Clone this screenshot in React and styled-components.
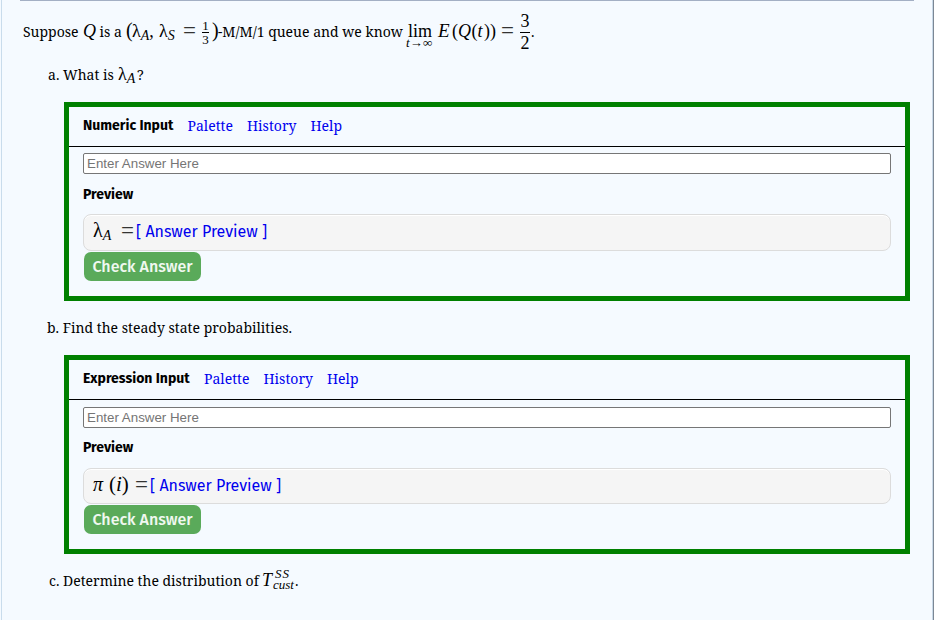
import React from "react"
import styled, { createGlobalStyle } from "styled-components"

const serif = `"Noto Serif", "DejaVu Serif Condensed", "DejaVu Serif", serif`
const sans = `"Fira Sans", "Noto Sans", sans-serif`
const math = `"Liberation Serif", "Times New Roman", serif`

const GlobalStyle = createGlobalStyle`
  * {
    box-sizing: border-box;
  }
  body {
    margin: 0;
    background: #f5faff;
  }
`

const Page = styled.main`
  width: 932px;
  height: 620px;
  margin-left: 1px;
  padding: 0 18px;
  overflow: hidden;
  background: #f5faff;
  border-left: 1px solid #c9dcec;
  border-right: 1px solid #c9d9e8;
  box-shadow: 1px 0 0 #7c8794;
  font-family: ${serif};
  font-stretch: condensed;
  font-size: 14px;
  line-height: 20px;
  color: #000;
`

const Rule = styled.hr`
  height: 1px;
  margin: 0;
  border: 0;
  background: #a3afc4;
`

const Line = styled.div`
  display: flex;
  align-items: baseline;
  height: ${(props) => props.$height}px;
  padding: ${(props) => props.$top}px 0 0 ${(props) => props.$left}px;
  white-space: nowrap;
`

const Words = styled.span`
  flex: none;
  width: ${(props) => props.$width}px;
`

const Sym = styled.span`
  flex: none;
  width: ${(props) => props.$width}px;
  font-family: ${math};
  font-size: ${(props) => props.$size || 18}px;
  font-style: ${(props) => (props.$upright ? "normal" : "italic")};
  line-height: 20px;
`

const Equals = styled(Sym)`
  color: #333;
  font-size: 23px;
  font-style: normal;
  line-height: 14px;
  span {
    line-height: 0;
    vertical-align: -1px;
  }
`

const Sub = styled.sub`
  font-size: 14px;
  font-style: italic;
  line-height: 0;
  vertical-align: -3px;
`

const Fraction = styled.span`
  display: inline-flex;
  flex: none;
  flex-direction: column;
  align-items: flex-start;
  align-self: flex-start;
  width: ${(props) => (props.$small ? 10 : 11)}px;
  margin-top: ${(props) => (props.$small ? -1 : -9)}px;
  font-family: ${math};
  font-size: ${(props) => (props.$small ? 13 : 18)}px;
  line-height: ${(props) => (props.$small ? 13 : 20)}px;
  span {
    width: ${(props) => (props.$small ? 7 : 10)}px;
    text-align: center;
  }
  span:first-child {
    padding-bottom: ${(props) => (props.$small ? 0 : 1)}px;
    border-bottom: 1px solid #000;
  }
`

const Limit = styled.span`
  display: inline-flex;
  flex: none;
  flex-direction: column;
  width: 32px;
  font-family: ${math};
  font-size: 18px;
  line-height: 20px;
  span {
    padding-left: 2px;
  }
  small {
    height: 8px;
    font-size: 13px;
    line-height: 4px;
    font-style: italic;
    letter-spacing: 0.2px;
  }
`

const Scripts = styled.span`
  display: inline-flex;
  flex: none;
  flex-direction: column;
  align-self: flex-start;
  width: 22px;
  margin-top: -2px;
  font-family: ${math};
  font-size: 13px;
  font-style: italic;
  line-height: 11px;
  span:first-child {
    padding-left: 2px;
    letter-spacing: 1px;
  }
`

const AnswerBox = styled.section`
  width: 846px;
  height: 199px;
  margin-left: 44px;
  border: 5px solid green;
`

const Toolbar = styled.header`
  display: flex;
  height: 40px;
  padding: 9px 14px 0;
  border-bottom: 1px solid #000;
`

const Heading = styled.strong`
  flex: none;
  width: ${(props) => props.$width || 60}px;
  font-family: ${sans};
  font-size: 14px;
  font-weight: 700;
  font-stretch: 87%;
  white-space: nowrap;
`

const ToolLink = styled.a`
  width: ${(props) => props.$width}px;
  color: #0000ee;
  cursor: pointer;
`

const Body = styled.div`
  padding: ${(props) => props.$top}px 14px 0;
`

const Answer = styled.input`
  display: block;
  width: 808px;
  height: 21px;
  padding: 1px 3px;
  border: 1px solid #767676;
  border-radius: 2px;
  background: #fff;
  font: 13.33px "Liberation Sans", Arial, sans-serif;
  &::placeholder {
    color: #757575;
    opacity: 1;
  }
`

const PreviewTitle = styled.div`
  height: 40px;
  padding-top: ${(props) => props.$top}px;
`

const Preview = styled.div`
  display: flex;
  align-items: baseline;
  width: 808px;
  height: ${(props) => props.$height}px;
  padding: 5px 0 0 9px;
  border: 1px solid #dcdcdc;
  border-radius: 8px;
  background: #f5f5f5;
  box-shadow: inset 0 1px 0 #fff;
`

const PreviewText = styled.span`
  color: #0000ee;
  font-family: ${sans};
  font-size: 16px;
  font-stretch: 90%;
  white-space: nowrap;
`

const CheckButton = styled.button`
  display: block;
  width: 117px;
  height: 29px;
  margin: 1px 0 0 1px;
  padding: 0 0 1px;
  border: 0;
  border-radius: 7px;
  background: #5aaa5a;
  color: #f0f8f0;
  font-family: ${sans};
  font-size: 16px;
  font-weight: 500;
  font-stretch: 90%;
  white-space: nowrap;
`

const AnswerPanel = ({ title, titleWidth, bodyTop, previewHeight, children }) => (
  <AnswerBox>
    <Toolbar>
      <Heading $width={titleWidth}>{title}</Heading>
      <ToolLink $width={59.5}>Palette</ToolLink>
      <ToolLink $width={63.5}>History</ToolLink>
      <ToolLink $width={40}>Help</ToolLink>
    </Toolbar>
    <Body $top={bodyTop}>
      <Answer placeholder="Enter Answer Here" />
      <PreviewTitle $top={16 - bodyTop}>
        <Heading>Preview</Heading>
      </PreviewTitle>
      <Preview $height={previewHeight}>
        {children}
        <PreviewText>[ Answer Preview ]</PreviewText>
      </Preview>
      <CheckButton>Check Answer</CheckButton>
    </Body>
  </AnswerBox>
)

const App = () => (
  <>
    <GlobalStyle />
    <Page>
      <Rule />
      <Line $height={62} $top={19} $left={3}>
        <Words $width={60}>Suppose</Words>
        <Sym $width={16.5}>Q</Sym>
        <Words $width={26.5}>is a</Words>
        <Sym $width={6} $upright $size={20}>
          (
        </Sym>
        <Sym $width={27} $upright>
          λ<Sub>A</Sub>,
        </Sym>
        <Sym $width={24} $upright>
          λ<Sub>S</Sub>
        </Sym>
        <Equals $width={19}>
          <span>=</span>
        </Equals>
        <Fraction $small>
          <span>1</span>
          <span>3</span>
        </Fraction>
        <Sym $width={6} $upright $size={20}>
          )
        </Sym>
        <Words $width={188}>-M/M/1 queue and we know</Words>
        <Limit>
          <span>lim</span>
          <small>t→∞</small>
        </Limit>
        <Sym $width={14} $size={19}>
          E
        </Sym>
        <Sym $width={6} $upright>
          (
        </Sym>
        <Sym $width={13.5}>Q</Sym>
        <Sym $width={6} $upright>
          (
        </Sym>
        <Sym $width={6.5}>t</Sym>
        <Sym $width={17} $upright>
          ))
        </Sym>
        <Equals $width={19}>
          <span>=</span>
        </Equals>
        <Fraction>
          <span>3</span>
          <span>2</span>
        </Fraction>
        <Words $width={5}>.</Words>
      </Line>
      <Line $height={39} $top={1} $left={28}>
        <Words $width={70}>a. What is</Words>
        <Sym $width={19} $upright>
          λ<Sub>A</Sub>
        </Sym>
        <Words $width={8}>?</Words>
      </Line>

      <AnswerPanel title="Numeric Input" titleWidth={104.5} bodyTop={6} previewHeight={37}>
        <Sym $width={28} $upright $size={20}>
          λ<Sub>A</Sub>
        </Sym>
        <Equals $width={15}>
          <span>=</span>
        </Equals>
      </AnswerPanel>

      <Line $height={54} $top={17} $left={27}>
        <Words>b. Find the steady state probabilities.</Words>
      </Line>

      <AnswerPanel title="Expression Input" titleWidth={121} bodyTop={7} previewHeight={36}>
        <Sym $width={16} $size={20}>
          π
        </Sym>
        <Sym $width={26} $upright $size={21}>
          (<i>i</i>)
        </Sym>
        <Equals $width={15}>
          <span>=</span>
        </Equals>
      </AnswerPanel>

      <Line $height={50} $top={16} $left={29}>
        <Words $width={213}>c. Determine the distribution of</Words>
        <Sym $width={11}>T</Sym>
        <Scripts>
          <span>SS</span>
          <span>cust</span>
        </Scripts>
        <Words>.</Words>
      </Line>
    </Page>
  </>
)

export default App
